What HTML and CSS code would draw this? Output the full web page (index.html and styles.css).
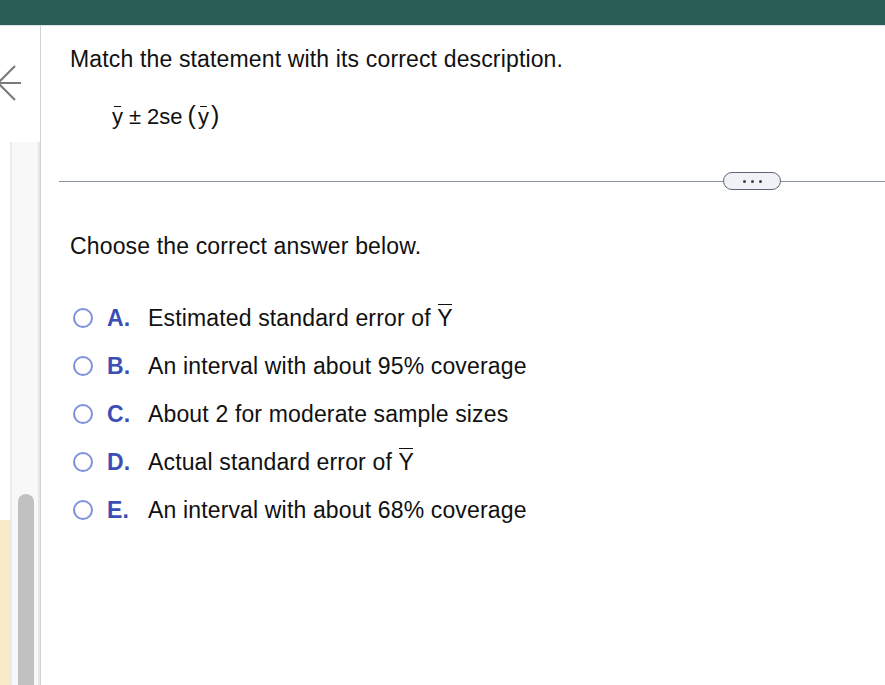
FILE: index.html
```html
<!DOCTYPE html>
<html>
<head>
<meta charset="utf-8">
<link rel="stylesheet" href="styles.css">
</head>
<body>
<div class="topbar"></div>
<div class="main">
  <div class="sidebar">
    <div class="back">
      <svg class="back-icon" width="30" height="40" viewBox="0 0 30 40"><path d="M15 3 L-2 20 L15 37 M-2 20 H21" fill="none" stroke="#7a7a7a" stroke-width="2.2"/></svg>
    </div>
    <div class="lower">
      <div class="ycol"><div class="yellow"></div></div>
      <div class="strip"><div class="thumb"></div></div>
    </div>
  </div>
  <div class="content">
    <div class="title">Match the statement with its correct description.</div>
    <div class="formula"><span class="bar">y</span><span class="op">±</span>2se<span class="paren open">(</span><span class="bar">y</span><span class="paren">)</span></div>
    <div class="sep">
      <div class="line"></div>
      <div class="pill"><span></span><span></span><span></span></div>
      <div class="line tail"></div>
    </div>
    <div class="prompt">Choose the correct answer below.</div>
    <div class="options">
      <div class="opt"><span class="radio"></span><span class="letter">A.</span><span class="txt">Estimated standard error of <span class="obar">Y</span></span></div>
      <div class="opt"><span class="radio"></span><span class="letter">B.</span><span class="txt">An interval with about 95% coverage</span></div>
      <div class="opt"><span class="radio"></span><span class="letter">C.</span><span class="txt">About 2 for moderate sample sizes</span></div>
      <div class="opt"><span class="radio"></span><span class="letter">D.</span><span class="txt">Actual standard error of <span class="obar">Y</span></span></div>
      <div class="opt"><span class="radio"></span><span class="letter">E.</span><span class="txt">An interval with about 68% coverage</span></div>
    </div>
  </div>
</div>
</body>
</html>
```

FILE: styles.css
```css
html, body {
  margin: 0;
  padding: 0;
  background: #ffffff;
  font-family: "Liberation Sans", Arial, sans-serif;
  color: #111111;
  overflow: hidden;
}
.topbar {
  height: 25px;
  background: #2b5d57;
  border-bottom: 1px solid #dde1e8;
}
.main {
  display: flex;
  height: 659px;
}
.sidebar {
  width: 40px;
  border-right: 1px solid #cfd3dc;
  display: flex;
  flex-direction: column;
  flex-shrink: 0;
}
.back {
  height: 116px;
  overflow: hidden;
}
.back-icon {
  display: block;
  margin-top: 37px;
}
.lower {
  flex: 1;
  display: flex;
}
.ycol {
  width: 10px;
  display: flex;
  flex-direction: column;
  justify-content: flex-end;
}
.yellow {
  height: 165px;
  background: #f8ecc8;
}
.strip {
  flex: 1;
  background: #f8f8f8;
  border-left: 2px solid #ebebeb;
  border-right: 2px solid #e6e6e6;
  display: flex;
  flex-direction: column;
  padding-top: 352px;
}
.thumb {
  flex: 1;
  width: 16px;
  margin-left: 6px;
  background: #c1c1c1;
  border-radius: 8px 8px 0 0;
}
.content {
  flex: 1;
  padding-top: 20px;
}
.title {
  font-size: 23px;
  line-height: 26px;
  letter-spacing: 0.15px;
  padding-left: 29px;
}
.formula {
  margin-top: 30px;
  padding-left: 71px;
  font-size: 22px;
  line-height: 26px;
  display: flex;
  align-items: baseline;
}
.bar {
  display: inline-block;
  position: relative;
}
.bar::before {
  content: "";
  position: absolute;
  left: 2px;
  right: 2px;
  top: 2px;
  border-top: 1px solid #111;
}
.op {
  margin: 0 6px;
}
.paren {
  font-size: 25px;
  margin: 0 2px;
}
.paren.open {
  margin-left: 5px;
}
.sep {
  margin-top: 42px;
  margin-left: 18px;
  display: flex;
  align-items: center;
  height: 18px;
}
.line {
  flex: 1;
  border-top: 1px solid #8a93a6;
}
.line.tail {
  flex: 0 0 104px;
}
.pill {
  width: 56px;
  height: 16px;
  border: 1px solid #5c6577;
  border-radius: 9px;
  background: #f0f2f5;
  display: flex;
  align-items: center;
  justify-content: center;
  gap: 5px;
}
.pill span {
  width: 3px;
  height: 3px;
  border-radius: 50%;
  background: #3b4150;
}
.prompt {
  margin-top: 43px;
  padding-left: 29px;
  font-size: 23px;
  line-height: 26px;
  letter-spacing: 0.15px;
}
.options {
  margin-top: 35px;
  padding-left: 32px;
}
.opt {
  height: 48px;
  display: flex;
  align-items: center;
  font-size: 23px;
  line-height: 26px;
  letter-spacing: 0.15px;
}
.radio {
  width: 16px;
  height: 16px;
  border: 2px solid #7d92d8;
  border-radius: 50%;
  flex-shrink: 0;
}
.letter {
  margin-left: 14px;
  width: 41px;
  font-weight: bold;
  color: #3c4fb6;
}
.obar {
  display: inline-block;
  position: relative;
}
.obar::before {
  content: "";
  position: absolute;
  left: 1px;
  right: 1px;
  top: -1px;
  border-top: 1.5px solid #111;
}
```
